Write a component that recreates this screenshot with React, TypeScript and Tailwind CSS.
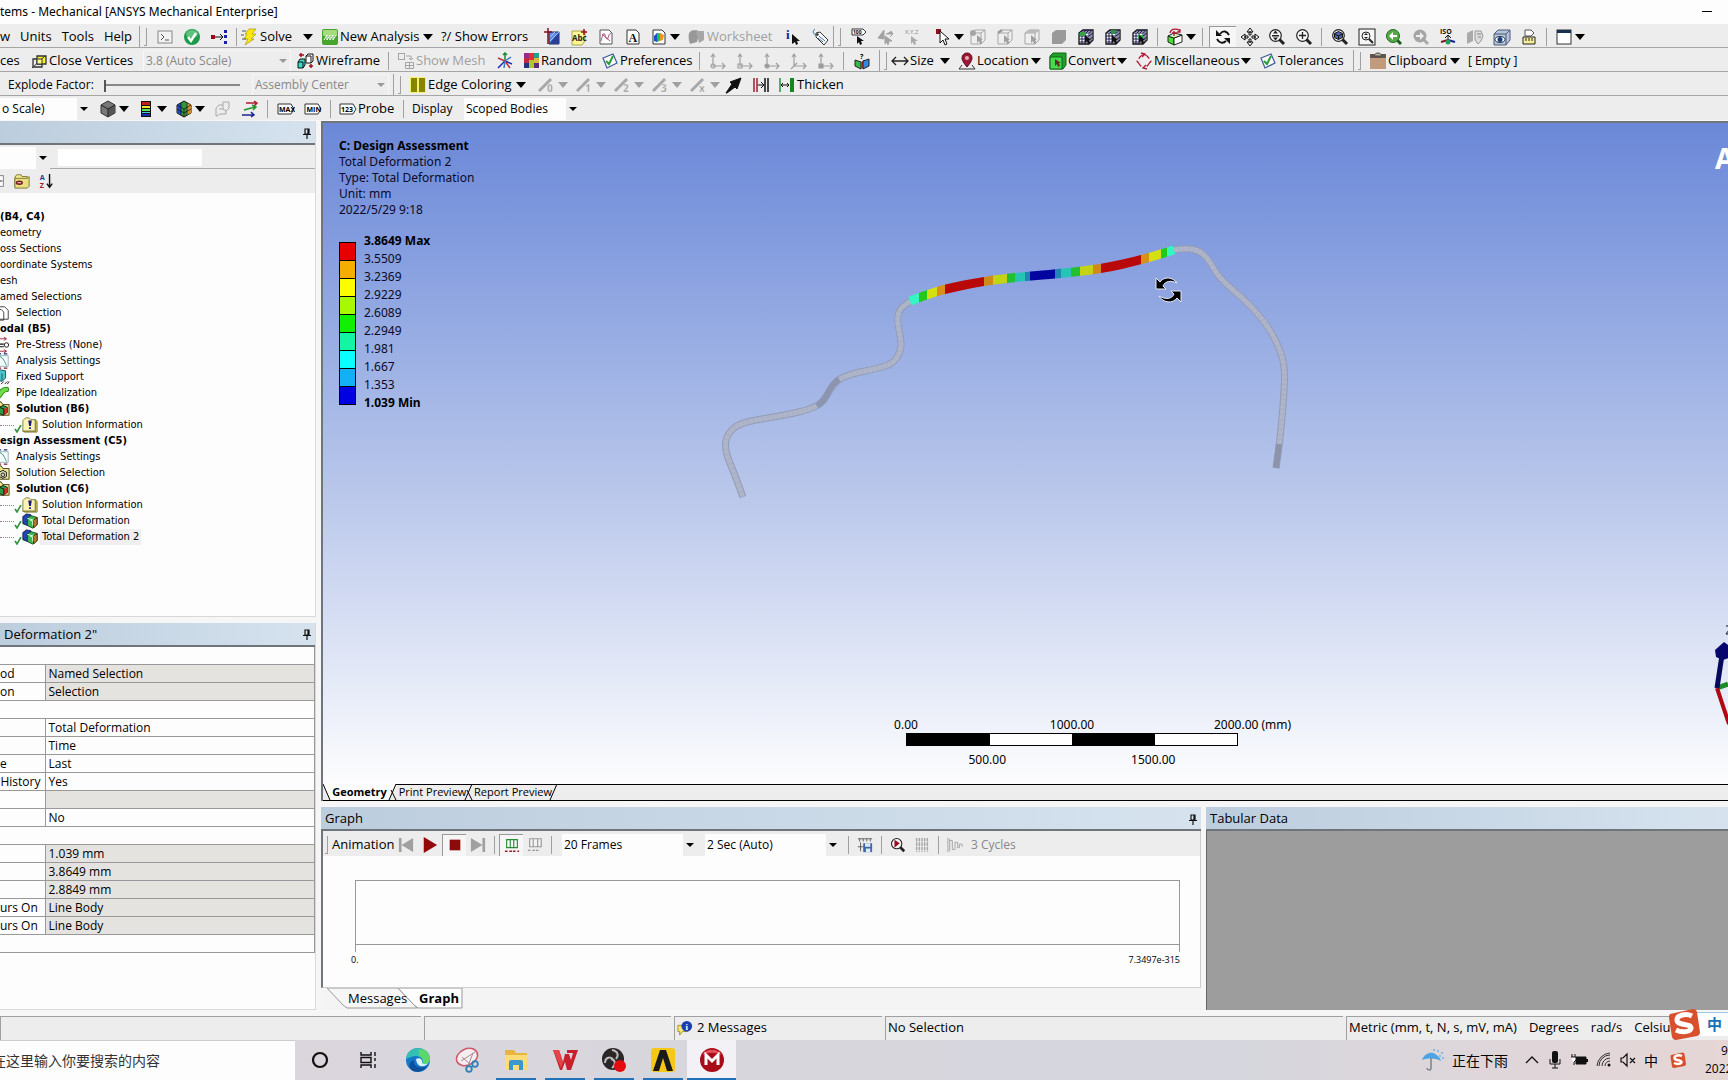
import { useState } from "react";
import type { ReactNode } from "react";

// Small page shape shared by several icons
const page = "M3 2h9l3 3v11H3z";
const cube = "M2 5l4-3h10v10l-4 4H2z";
const cubeEdges = "M2 5h10v11M12 5l4-3";
const cursor = "M8 7v8l2-2 1 3 2-1-1-3h2z";

// Wire cube used by the selection filters
const wireCube = (color: string, fill: string) => (
  <>
    <path d={cube} fill={fill} stroke={color} />
    <path d={cubeEdges} fill="none" stroke={color} />
  </>
);

const meshCube = (dot: string, x: number, y: number) => (
  <>
    <path d={cube} fill="#fff" stroke="#111" strokeWidth="1.3" />
    <path d="M2 8h10M2 11h10M2 14h10M5 5v11M8 5v11M2 5h10v11M12 5l4-3M4 3h10M14 4v10M12 8l4-3M12 12l4-3M6 5l3-3M9 5l3-3" fill="none" stroke="#1c1c50" />
    <rect x={x} y={y} width="5" height="4" fill={dot} />
    <path d={cursor} fill="#111" />
  </>
);

const lens = (inner: ReactNode) => (
  <>
    <path d="M11 11l5 5" stroke="#222" strokeWidth="3" />
    <circle cx="7.500" cy="7.500" r="5.800" fill="#f6f6f6" stroke="#222" strokeWidth="1.200" />
    {inner}
  </>
);

const axes = (dots: ReactNode) => (
  <g stroke="#a0a0a0" fill="none" strokeWidth="1.200">
    <path d="M4 2v12h12M2 5l2-3 2 3M13 11l3 3-3 3" />
    {dots}
  </g>
);

const edge = (label: string) => (
  <>
    <path d="M1 15L13 3" stroke="#a8a8a8" strokeWidth="3" />
    <text x="9" y="16" fontSize="10" fontWeight="700" fill="#8d8d8d" stroke="#ededed" strokeWidth="0.400">{label}</text>
  </>
);

const art: Record<string, ReactNode> = {
  console: <><rect x="2" y="3" width="14" height="12" fill="#f2f2f2" stroke="#888" /><path d="M5 6l3 3-3 3M9 12h4" fill="none" stroke="#555" /></>,
  check: <><circle cx="9" cy="9" r="8" fill="#1c9b4a" /><ellipse cx="9" cy="6" rx="6" ry="4" fill="#5fc27c" /><path d="M5 9l3 4 5-8" fill="none" stroke="#fff" strokeWidth="2.400" /></>,
  flow: <><rect x="1" y="7" width="4" height="4" fill="#a00018" /><path d="M5 9h7M10 6l3 3-3 3" stroke="#111" fill="none" /><path d="M14 2h3v3h-3zM14 7h3v3h-3zM14 13h3v3h-3z" fill="#1620a8" /></>,
  bolt: <><path d="M8 1l7 0-4 5 4 0-5 5 3 0-9 6 3-6H3l3-5H4z" fill="#fde910" stroke="#a89600" strokeWidth="0.700" /><path d="M1 3h4M0 7h3M1 11h4" stroke="#555" /></>,
  analysis: <><rect x="1" y="1" width="16" height="16" rx="2" fill="#46a52c" /><rect x="2" y="2" width="14" height="6" rx="1" fill="#a5dc7c" /><path d="M3 12l3-5v5l3-5v5l3-5v5l3-5" stroke="#fff" fill="none" /></>,
  plane: <><path d="M6 4h10v12H6z" fill="#5f8be8" stroke="#1c2c60" /><path d="M6 16L16 4v12z" fill="#2a3f98" /><path d="M7 9l5-5M7 13l9-9" stroke="#a6c0fa" /><path d="M5 0v16M1 4h8" stroke="#841020" strokeWidth="1.500" /></>,
  abc: <><path d="M2 3h13v10l-3 4H2z" fill="#fbf894" stroke="#a9a54c" /><text x="2" y="13" fontSize="8" fontWeight="700" fill="#222">Abc</text><path d="M14 1v6M11 4h6" stroke="#9c1020" strokeWidth="1.500" /></>,
  chart: <><path d={page} fill="#fff" stroke="#555" /><path d="M4 13c2-8 3-9 4-6s2 6 3 3 1-4 3-5M5 6l8 7" fill="none" stroke="#b04c80" /></>,
  letter: <><path d={page} fill="#fff" stroke="#333" /><text x="4.500" y="14" fontSize="12" fontWeight="700" fontFamily="Liberation Serif" fill="#111">A</text></>,
  contour: <><path d={page} fill="#fff" stroke="#333" /><path d="M4 8l3-3 3 1v6l-3 2-3-1z" fill="#174fd0" /><path d="M7 6l4-1v7l-4 2z" fill="#19c840" /><path d="M10 5l4 2-1 5-3 1z" fill="#e9952c" /></>,
  worksheet: <><path d="M1 5c3-4 6-2 8-3l2 3-2 9-7 2c-1-3-2-7-1-11z" fill="#989898" /><path d="M8 3h8v9l-5 3z" fill="#a7a7a7" /></>,
  info: <><text x="2" y="11" fontSize="13" fontWeight="700" fontFamily="Liberation Serif" fill="#1421a0">i</text><path d="M8 6v10l3-2 1 3 2-1-1-3h3z" fill="#111" /></>,
  tag: <><path d="M5 5l4-1 8 8-4 5-8-8z" fill="#fff" stroke="#333" /><path d="M4 1c-3 2-2 6 2 6M8 8l6 5M7 10l5 4" fill="none" stroke="#3f6f9c" /><circle cx="6.500" cy="6.500" r="1.200" fill="#333" /></>,
  tagCursor: <><path d="M2 1h11l3 3-3 3H2z" fill="#fff" stroke="#333" /><text x="3" y="6" fontSize="5" fontWeight="700">100</text><path d="M7 8v8l2-2 1 3 2-1-1-3h3z" fill="#111" /></>,
  flip: <path d="M1 10l6-8v9zM9 6h7l-2-3M16 6l-3 3M8 8v8l2-2 1 3 1-4h3z" fill="#a3a3a3" stroke="#a3a3a3" />,
  xyz: <><text x="1" y="6" fontSize="6" fill="#888">X,Y,Z</text><path d="M7 8v8l2-2 1 3 2-1-1-3h3z" fill="#aaa" /></>,
  pick: <><rect x="2" y="1" width="5" height="5" fill="#8b1020" /><path d="M6 3v12l3-3 2 5 2-1-2-5h4z" fill="#fff" stroke="#111" /></>,
  vertex: <>{wireCube("#a5a5a5", "#efefef")}<circle cx="4" cy="5" r="3" fill="#a5a5a5" /><path d={cursor} fill="#a0a0a0" /></>,
  edgeSel: <>{wireCube("#a5a5a5", "#efefef")}<path d="M2 5l4-3" stroke="#999" strokeWidth="2.500" /><path d={cursor} fill="#a0a0a0" /></>,
  face: <>{wireCube("#a5a5a5", "#efefef")}<path d="M2 5l4-3h10l-4 3z" fill="#bbb" /><path d={cursor} fill="#a0a0a0" /></>,
  body: <path d={cube} fill="#9a9a9a" />,
  meshNode: meshCube("#37a34a", 3, 4),
  meshFace: meshCube("#2f8f40", 7, 2),
  meshElem: meshCube("#37a34a", 7, 7),
  extend: <><path d="M2 8l6 2v7l-6-3z" fill="#49e02c" stroke="#222" /><path d="M8 10l8-3v7l-8 3z" fill="#fff" stroke="#222" /><path d="M2 8l6-3 8 2-8 3z" fill="#d8f8c8" stroke="#222" /><path d="M4 5c1-5 9-5 10-1M14 1v3h-3M8 3v5M6 5h5" fill="none" stroke="#b01830" strokeWidth="1.300" /></>,
  rotate: <><path d="M6 6c3-4 7-3 9 1M12 13c-3 3-7 2-9-2" fill="none" stroke="#111" strokeWidth="1.800" /><path d="M2 2v6h6zM16 16v-6h-6z" fill="#111" /></>,
  move: <path d="M9 0l3 4H6zM9 18l3-4H6zM0 9l4-3v6zM18 9l-4-3v6zM8 4h2v3H8zM8 11h2v3H8zM4 8h3v2H4zM11 8h3v2h-3z" fill="#f7f7f7" stroke="#111" />,
  zoomV: lens(<path d="M7.500 2.500l2.500 3H5zM7.500 12.500l2.500-3H5zM4 7h7v1.500H4z" fill="#222" />),
  zoomIn: lens(<path d="M7.500 4v7M4 7.500h7" stroke="#222" strokeWidth="1.300" />),
  zoomFit: lens(<><path d="M7.500 3.500l4 2v4l-4 2-4-2v-4z" fill="#5461ae" stroke="#111" /><path d="M4 6l3.500 2L11 6M7.500 8v3" stroke="#111" fill="none" /></>),
  zoomBox: <><rect x="1" y="1" width="16" height="16" fill="#f6f6f6" stroke="#222" /><circle cx="8" cy="8" r="4" fill="none" stroke="#222" /><path d="M11 11l4 4" stroke="#222" strokeWidth="2" /><path d="M8 5l2 2H6zM8 11l2-2H6z" fill="#222" /></>,
  zoomPrev: <><path d="M11 11l5 5" stroke="#1d5c1d" strokeWidth="3" /><circle cx="8" cy="8" r="6.500" fill="#55a848" stroke="#226e22" /><path d="M4 8l4-4v3h4v2H8v3z" fill="#fff" /></>,
  zoomNext: <><path d="M11 11l5 5" stroke="#aaa" strokeWidth="3" /><circle cx="8" cy="8" r="6.500" fill="#a5a5a5" /><path d="M12 8L8 4v3H4v2h4v3z" fill="#eee" /></>,
  iso: <><text x="1" y="6" fontSize="7" fontWeight="700" fill="#111">ISO</text><path d="M9 7v9M6 10l3-3 3 3" stroke="#111" fill="none" /><path d="M9 12l-7 2" stroke="#921020" strokeWidth="2" /><path d="M9 12l7 2" stroke="#1421a0" strokeWidth="2" /><circle cx="9" cy="14" r="2.500" fill="#2d9c58" /></>,
  mirror: <><path d="M1 5l6-3v11l-6 3z" fill="#aaa" /><path d="M9 3h6l2 5-2 5-3 3-3-4z" fill="#dcdcdc" stroke="#999" /><path d="M11 6h4M12 9h3" stroke="#888" /></>,
  view: <><path d="M1 6l4-4h12v10l-4 5H1z" fill="#b4c4da" stroke="#4c5b78" /><path d="M1 6h12v11M13 6l4-4" fill="none" stroke="#4c5b78" /><ellipse cx="7" cy="11.500" rx="5" ry="3" fill="#fff" stroke="#234" /><circle cx="7" cy="11.500" r="2.500" fill="#183c80" /></>,
  ruler: <><path d="M5 2h6l3 3-3 3H5z" fill="#fff" stroke="#555" /><path d="M3 9h12v7H3z" fill="#f5f098" stroke="#222" /><path d="M6 10v3M9 10v3M12 10v3" stroke="#222" /></>,
  window: <><rect x="2" y="2" width="14" height="14" fill="#fff" stroke="#333" /><path d="M2 2h14v3H2z" fill="#1a3050" /></>,
  close: <><path d="M3 7h9v8H3z" fill="none" stroke="#333" strokeWidth="1.300" /><path d="M7 4h9v8H7z" fill="#fbf030" stroke="#333" strokeWidth="1.300" /><path d="M2 16L15 4" stroke="#333" /><path d="M7 7h5v5H7z" fill="#fffb90" stroke="#333" /></>,
  wire: <><path d="M1 10l2-3h5v6l-2 3H1z" fill="#3fd8c8" stroke="#111" /><path d="M9 4l2-2h5v7l-2 2H9z" fill="#fff" stroke="#111" /><path d="M9 4h5v7M1 10h5v6" fill="none" stroke="#111" /><path d="M4 1v4M2 3h5M14 12v4M12 14h4" stroke="#a01024" strokeWidth="1.500" /></>,
  mesh: <g fill="none" stroke="#a5a5a5"><rect x="1.500" y="1.500" width="6" height="6" /><path d="M9 4h5v3M12 6l2 2 2-2M8.500 10.500h8v6h-8zM12.500 10v7M8 13.500h9" /></g>,
  spark: <g strokeWidth="1.500" fill="none"><path d="M9 9V1M7 3l2-2 2 2" stroke="#198c30" /><path d="M9 9l-7 7M9 9l7 3" stroke="#1f2bb0" /><path d="M2 6l7 3 5 7" stroke="#c22a3a" /><path d="M9 9l6-4M9 9l-1 7" stroke="#3a7ac8" /></g>,
  random: <><path d="M2 1h5v5H2z" fill="#952a92" /><path d="M7 1h5v7H7z" fill="#e23030" /><path d="M12 1h5v5h-5z" fill="#2a9c8c" /><path d="M2 6h5v5H2z" fill="#c22840" /><path d="M7 8h5v8H7z" fill="#a9c830" /><path d="M12 6h5v5h-5z" fill="#d8b840" /><path d="M2 11h5v5H2z" fill="#24357c" /><path d="M12 11h5v5h-5z" fill="#5b2c74" /></>,
  prefs: <><path d="M2 6l10-4 4 9-10 5z" fill="#fafafa" stroke="#3b5a9c" strokeWidth="1.200" /><path d="M5 9l3 3 4-8" stroke="#2a9c3c" strokeWidth="2" fill="none" /></>,
  axesA: axes(<circle cx="4" cy="14" r="2" />),
  axesB: axes(<path d="M2 12h4v4H2z" />),
  axesC: axes(<circle cx="4" cy="14" r="2" fill="#999" />),
  axesD: axes(<path d="M1 17l6-6" />),
  axesE: axes(<path d="M2 12h4v4H2z" fill="#999" />),
  book: <><text x="7" y="7" fontSize="7" fontWeight="700">?</text><path d="M2 8l6 2v7l-6-3z" fill="#36b848" stroke="#222" /><path d="M8 10l3-2v7l-3 2z" fill="#e02828" /><path d="M10 9l6-2v7l-6 3z" fill="#2f8ae0" stroke="#222" /></>,
  size: <path d="M1 9h16M5 5L1 9l4 4M13 5l4 4-4 4" stroke="#222" strokeWidth="1.300" fill="none" />,
  pin: <><path d="M9 15C4 9 4 7 4 6a5 5 0 0 1 10 0c0 1 0 3-5 9z" fill="#9c1834" stroke="#5c0c20" /><circle cx="9" cy="6" r="2" fill="#e8b0b8" /><path d="M4 13l-3 4h16l-3-4" fill="none" stroke="#333" /></>,
  convert: <><path d="M1 4l3-3h13v12l-3 4H1z" fill="#22a02c" stroke="#0f6418" /><path d="M1 5h12v12H1z" fill="#49d94c" stroke="#0f6418" /><path d="M6 7v7l2-2 1 3 2-1-1-3h2z" fill="#5c3024" /></>,
  misc: <g fill="none" stroke="#b01c38" strokeWidth="1.300"><path d="M9 2C5 4 5 5 2 9c3 4 3 5 7 7M9 2c4 2 4 3 7 7-3 4-3 5-7 7" strokeDasharray="7 3" /><path d="M6 1l4 1-3 3M12 17l-4-1 3-3" /></g>,
  clip: <><path d="M1 2h16v15H1z" fill="#c29a7c" /><path d="M1 2h16v4H1z" fill="#64564c" /><path d="M5 4c1-4 7-4 8 0z" fill="#b8b8a8" stroke="#444" /></>,
  coloring: <><path d="M1 1h16v16H1z" fill="#f4f070" /><path d="M2 2h6v14H2zM10 2h6v14h-6z" fill="#858500" /></>,
  edge0: edge("0"), edge1: edge("1"), edge2: edge("2"), edge3: edge("3"), edgeX: edge("x"),
  dart: <path d="M1 17l6-9-2-2 11-4-4 11-2-2-8 6z" fill="#111" stroke="#111" />,
  gapIcon: <><path d="M2 2v14M5 2v14" stroke="#a01c30" strokeWidth="1.500" /><path d="M13 2v14M16 2v14" stroke="#111" strokeWidth="1.500" /><path d="M6 9h6M9 6l3 3-3 3" fill="none" stroke="#111" /></>,
  thicken: <><path d="M2 2v14" stroke="#20963a" strokeWidth="1.500" /><path d="M12 2h4v14h-4z" fill="#17861f" /><path d="M3 9h8M5 7L3 9l2 2M9 7l2 2-2 2" fill="none" stroke="#111" /></>,
  solid: <><path d="M9 1l7 4v8l-7 4-7-4V5z" fill="#777" stroke="#333" /><path d="M9 9l7-4v8l-7 4z" fill="#555" /><path d="M2 5l7 4 7-4M9 9v8" fill="none" stroke="#222" /></>,
  bands: <><path d="M4 1h10v16H4z" fill="#111" /><path d="M5 2h8v3H5z" fill="#c81c1c" /><path d="M5 6h8v2H5z" fill="#f2e62c" /><path d="M5 9h8v2H5z" fill="#5be05c" /><path d="M5 12h8v1H5z" fill="#40c8e8" /><path d="M5 14h8v2H5z" fill="#1c28b0" /></>,
  result: <><path d="M9 1l7 4v8l-7 4-7-4V5z" fill="#2f9a3c" stroke="#111" /><path d="M2 5l4-2v12l-4-2z" fill="#2645c0" /><path d="M12 3l4 2v8l-4 2z" fill="#d09030" /><path d="M2 5l7 4 7-4M9 9v8M6 3v12M12 3v12M2 9l7 4 7-4" stroke="#111" strokeWidth="0.700" fill="none" /></>,
  ghost: <path d="M2 8l3-3h4V2h6v6l-3 3v3H6l-3 2H2zM9 5v4H5M9 9l3 2" fill="#ececec" stroke="#a8a8a8" />,
  vectors: <g fill="none" strokeWidth="1.500"><path d="M5 3h11M13 1l3 2-3 3" stroke="#b01c30" /><path d="M3 10L14 7M11 5l4 2-3 3" stroke="#22942c" /><path d="M1 15h11M10 12l3 3-3 2" stroke="#1b2790" /></g>,
  max: <><path d="M1 4h13l3 5-3 5H1z" fill="#fff" stroke="#333" /><text x="2" y="12" fontSize="7" fontWeight="700">MAX</text></>,
  min: <><path d="M1 4h13l3 5-3 5H1z" fill="#fff" stroke="#333" /><text x="2.500" y="12" fontSize="7" fontWeight="700">MIN</text></>,
  probe: <><path d="M1 4h13l3 5-3 5H1z" fill="#fff" stroke="#333" /><text x="2" y="12" fontSize="7" fontWeight="700">123</text></>,
  folder: <><path d="M1 5l2-3h5l1 2h6v11H1z" fill="#f0e890" stroke="#77702c" /><path d="M1 6h14l2-2v11l-2 2H1z" fill="#e8df80" stroke="#77702c" /><ellipse cx="6" cy="11" rx="4" ry="2.500" fill="#7c1c20" /><path d="M4 11h4" stroke="#fff" /></>,
  sort: <><text x="2" y="8" fontSize="8" fontWeight="700" fill="#1c3d94">A</text><text x="2" y="17" fontSize="8" fontWeight="700" fill="#a02028">Z</text><path d="M13 1v14M10 12l3 4 3-4" stroke="#111" strokeWidth="1.600" fill="none" /></>,
  collapse: <><rect x="3" y="3" width="12" height="12" fill="#fff" stroke="#777" /><path d="M6 9h8" stroke="#111" /></>,
  blankPage: <path d="M4 2h8l4 4v10H4zM1 5h7l3 3v9H1z" fill="#fff" stroke="#333" />,
  preStress: <><path d="M3 2h11M11 0l3 2-3 2M3 16h11M11 14l3 2-3 2" stroke="#a02030" fill="none" /><path d="M6 8h5M6 11h5" stroke="#111" strokeWidth="1.300" /><circle cx="14" cy="9" r="2.500" fill="none" stroke="#111" /></>,
  settings: <><path d="M3 3h13v12H3z" fill="#f4fafa" stroke="#8fb0b0" /><path d="M5 4c5 0 6 4 9 10" stroke="#2b8a78" fill="none" /><path d="M4 1h4M11 1h4" stroke="#1c2480" strokeWidth="1.500" /><path d="M4 17h4M11 17h4" stroke="#8c1424" strokeWidth="1.500" /></>,
  support: <><path d="M3 4l4-3 6 1v8l-4 4-6-2z" fill="#4cc4cc" stroke="#174c58" /><path d="M9 5v8" stroke="#174c58" /><path d="M8 17l3-3M12 17l3-3M15 17l2-3" stroke="#111" /></>,
  pipe: <g fill="none" strokeLinecap="round"><path d="M2 14c7-1 4-9 12-9" stroke="#2f8c1c" strokeWidth="6" /><path d="M2 14c7-1 4-9 12-9" stroke="#6fdc48" strokeWidth="4" /></g>,
  solution: <><path d="M1 4l3-3h4l2 3h7v12H1z" fill="#efe78c" stroke="#3b3410" /><path d="M6 7l4-2 5 2v6l-5 3-4-2z" fill="#2a9c48" stroke="#111" /><path d="M11 9l4-2v6l-4 3z" fill="#cc3028" /><path d="M6 7l5 2v7" fill="none" stroke="#111" /></>,
  solSel: <><path d="M1 4l3-3h4l2 3h7v12H1z" fill="#efe78c" stroke="#3b3410" /><path d="M6 8l4-2 4 2v5l-4 2-4-2z" fill="#d8d8b0" stroke="#111" /><circle cx="10" cy="11" r="2" fill="none" stroke="#111" /></>,
  solInfo: <><path d="M1 4l3-3h4l2 2h5v13H1z" fill="#f9f3b8" stroke="#7c7430" /><path d="M15 3l2 2v12H3l-2-1h14z" fill="#d8cc60" stroke="#7c7430" /><path d="M7 4h4l-1 6H8z" fill="#181880" /><rect x="8" y="11.500" width="2" height="2" fill="#181880" /></>,
  deform: <><path d="M1 4l4-3 5 1v9l-4 3-5-2z" fill="#2046b4" stroke="#101840" /><path d="M6 6l4-3 7 2v8l-5 4-6-3z" fill="#3cb850" stroke="#14401c" /><path d="M13 8l4-3v8l-4 4z" fill="#c07830" stroke="#402810" /><path d="M9 8l3 1v5M6 6l7 2" stroke="#e8ffe8" fill="none" /></>,
  first: <path d="M1 1h3v16H1zM17 1v16L4 9z" fill="#a0a0a0" />,
  play: <path d="M2 0l15 9-15 9z" fill="#940a0a" />,
  stop: <path d="M3 3h12v12H3z" fill="#8c0a0a" />,
  last: <path d="M14 1h3v16h-3zM1 1v16l13-8z" fill="#a0a0a0" />,
  frames: <><path d="M3 3h12v9H3zM7 3v9M11 3v9" fill="#fff" stroke="#288a34" strokeWidth="1.300" /><path d="M1 16h3M6 16h3M10 16h3M15 16h2" stroke="#922" strokeWidth="1.500" /></>,
  framesOff: <><path d="M3 2h13v9H3zM7 2v9M12 2v9" fill="#f4f4f4" stroke="#999" strokeWidth="1.300" /><path d="M1 15h3M6 15h3M10 15h3" stroke="#999" strokeWidth="1.500" /></>,
  save: <><path d="M1 2h16M3 2v3M7 2v3M11 2v3M15 2v3M4 6v10M1 11h6" stroke="#555" fill="none" /><path d="M7 7h10v10H7z" fill="#3a66ac" /><path d="M9 7h6v4H9zM10 13h5v4h-5z" fill="#e0e8f4" /></>,
  zoomPlay: lens(<path d="M5 3l6 4-6 5z" fill="#94101c" />),
  table: <path d="M3 1v16M6 1v16M9 1v16M12 1v16M15 1v16" stroke="#a5a5a5" strokeWidth="1.600" strokeDasharray="4 1" />,
  cycles: <path d="M1 1v16M3 2v14M3 4h3v10h3V6h3v6h2V8h3v3" stroke="#a0a0a0" fill="none" />,
  message: <><path d="M1 6h11v7H6l-3 4v-4H1z" fill="#f8e878" stroke="#a08c20" /><circle cx="11" cy="7" r="6" fill="#1b3fae" /><text x="9.500" y="11" fontSize="10" fontWeight="700" fontFamily="Liberation Serif" fill="#fff">i</text></>,
};

function Icon({ name, className = "size-[18px]" }: { name: string; className?: string }) {
  return (
    <svg viewBox="0 0 18 18" className={`shrink-0 ${className}`} aria-hidden="true">
      {art[name]}
    </svg>
  );
}

function Arrow({ muted = false }: { muted?: boolean }) {
  return (
    <svg viewBox="0 0 10 6" className={`h-1.5 w-2.5 shrink-0 ${muted ? "fill-[#a0a0a0]" : "fill-black"}`} aria-hidden="true">
      <path d="M0 0h10L5 6z" />
    </svg>
  );
}

function Sep({ space = "mx-1" }: { space?: string }) {
  return <span className={`h-[18px] w-px shrink-0 bg-[#a0a0a0] ${space}`} />;
}

// Divider between two docked toolbars, followed by the drag grip
function Grip() {
  return (
    <span className="flex h-full w-3 shrink-0 items-center border-l border-[#a0a0a0]">
      <span className="ml-1 h-[18px] w-[3px] border-r border-b border-[#a0a0a0]" />
    </span>
  );
}

type ToolProps = { name: string; label: string; pressed?: boolean; narrow?: boolean };

function Tool({ name, label, pressed = false, narrow = false }: ToolProps) {
  return (
    <button
      type="button"
      aria-label={label}
      className={`flex h-[22px] shrink-0 items-center justify-center ${narrow ? "w-6" : "w-[27px]"} ${pressed ? "border-t border-l border-[#999] bg-[#f6f6f6]" : ""}`}
    >
      <Icon name={name} className={narrow ? "size-4" : "size-[18px]"} />
    </button>
  );
}

// Icon with a drop-down arrow
function MenuTool({ name, label, muted = false }: { name: string; label: string; muted?: boolean }) {
  return (
    <button type="button" aria-label={label} className="flex h-[22px] w-[34px] shrink-0 items-center gap-0.5 pl-1">
      <Icon name={name} />
      <Arrow muted={muted} />
    </button>
  );
}

type TextToolProps = { name?: string; text: string; width: string; menu?: boolean; muted?: boolean };

function TextTool({ name, text, width, menu = false, muted = false }: TextToolProps) {
  return (
    <button type="button" className={`flex h-[22px] shrink-0 items-center gap-px whitespace-nowrap ${width} ${muted ? "text-[#a0a0a0]" : ""}`}>
      {name && <Icon name={name} />}
      <span className={menu ? "grow text-left" : ""}>{text}</span>
      {menu && <span className="pr-2"><Arrow /></span>}
    </button>
  );
}

type ComboProps = { label: string; value: string; width: string; disabled?: boolean };

function Combo({ label, value, width, disabled = false }: ComboProps) {
  return (
    <span className={`relative flex h-[22px] shrink-0 items-center ${width} ${disabled ? "border border-[#f8f8f8]" : "bg-[#fdfdfd]"}`}>
      <select
        aria-label={label}
        disabled={disabled}
        className={`h-full w-full appearance-none bg-transparent pl-0.5 text-[12px] outline-none ${disabled ? "text-[#888]" : "text-black"}`}
      >
        <option>{value}</option>
      </select>
      <span className={`pointer-events-none absolute inset-y-0 right-0 flex w-3.5 items-center justify-center ${disabled ? "" : "bg-[#ededed]"}`}>
        <svg viewBox="0 0 8 4" className={`h-1 w-2 ${disabled ? "fill-[#999]" : "fill-black"}`} aria-hidden="true"><path d="M0 0h8L4 4z" /></svg>
      </span>
    </span>
  );
}

function PanelHeader({ title, pin = true }: { title: string; pin?: boolean }) {
  return (
    <div className="flex h-6 shrink-0 items-center justify-between border-b-2 border-[#70757c] bg-linear-to-r from-[#bccddd] to-[#d6e3ef] px-1 pt-0.5 text-[13px]">
      <span>{title}</span>
      {pin && (
        <button type="button" aria-label="Pin panel">
          <svg viewBox="0 0 8 11" className="h-[11px] w-2" aria-hidden="true">
            <path d="M2 1h4v5H2zM5 1v5M0 6.500h8M4 7v4" fill="none" stroke="#111" strokeWidth="1.200" />
          </svg>
        </button>
      )}
    </div>
  );
}

function Toolbars() {
  const [explode, setExplode] = useState(0);
  const row = "flex h-6 items-center overflow-hidden border-b border-[#a5a5a5] bg-[#ededed] pt-0.5";

  return (
    <div className="shrink-0 text-[13px]">
      <div className={row}>
        <nav className="flex w-[139px] shrink-0 items-center gap-2.5 whitespace-nowrap">
          <button type="button">w</button>
          <button type="button">Units</button>
          <button type="button">Tools</button>
          <button type="button">Help</button>
        </nav>
        <Grip />
        <Tool name="console" label="Command window" />
        <Tool name="check" label="Status" />
        <Tool name="flow" label="Wizard" />
        <Sep />
        <TextTool name="bolt" text="Solve" width="w-[80px]" menu />
        <TextTool name="analysis" text="New Analysis" width="w-[120px]" menu />
        <TextTool text="?/ Show Errors" width="w-[97px]" />
        <Tool name="plane" label="Section plane" />
        <Tool name="abc" label="Annotation" />
        <Tool name="chart" label="Chart" />
        <Tool name="letter" label="Comment" />
        <MenuTool name="contour" label="Image" />
        <span className="w-2" />
        <TextTool name="worksheet" text="Worksheet" width="w-[91px]" muted />
        <Tool name="info" label="Selection information" />
        <Tool name="tag" label="Tags" />
        <Grip />
        <Tool name="tagCursor" label="Label" />
        <Tool name="flip" label="Direction" />
        <Tool name="xyz" label="Coordinates" />
        <span className="w-1" />
        <MenuTool name="pick" label="Select type" />
        <Tool name="vertex" label="Vertex" />
        <Tool name="edgeSel" label="Edge" />
        <Tool name="face" label="Face" />
        <Tool name="body" label="Body" />
        <Tool name="meshNode" label="Node" />
        <Tool name="meshFace" label="Element face" />
        <Tool name="meshElem" label="Element" />
        <Sep />
        <MenuTool name="extend" label="Extend selection" />
        <Sep space="mx-1.5" />
        <Tool name="rotate" label="Rotate" pressed />
        <Tool name="move" label="Pan" />
        <Tool name="zoomV" label="Zoom" />
        <Tool name="zoomIn" label="Box zoom" />
        <Sep />
        <Tool name="zoomFit" label="Zoom to fit" />
        <Tool name="zoomBox" label="Magnifier" />
        <Tool name="zoomPrev" label="Previous view" />
        <Tool name="zoomNext" label="Next view" />
        <Tool name="iso" label="Isometric" />
        <Tool name="mirror" label="Look at" />
        <Tool name="view" label="Manage views" />
        <Tool name="ruler" label="Rescale annotation" />
        <Sep />
        <MenuTool name="window" label="Viewports" />
      </div>

      <div className={row}>
        <TextTool text="ces" width="w-[30px]" />
        <TextTool name="close" text="Close Vertices" width="w-[113px]" />
        <Combo label="Deformation scale" value="3.8 (Auto Scale)" width="w-[148px]" disabled />
        <span className="w-1.5" />
        <TextTool name="wire" text="Wireframe" width="w-[83px]" />
        <Sep space="mx-2" />
        <TextTool name="mesh" text="Show Mesh" width="w-[94px]" muted />
        <Tool name="spark" label="Triad" />
        <span className="w-1" />
        <TextTool name="random" text="Random" width="w-[79px]" />
        <TextTool name="prefs" text="Preferences" width="w-[94px]" />
        <Sep />
        <Tool name="axesA" label="Coordinate system" />
        <Tool name="axesB" label="Offset X" />
        <Tool name="axesC" label="Offset Y" />
        <Tool name="axesD" label="Rotate X" />
        <Tool name="axesE" label="Rotate Y" />
        <Sep />
        <Tool name="book" label="Help" />
        <span className="w-1" />
        <Grip />
        <TextTool name="size" text="Size" width="w-[67px]" menu />
        <TextTool name="pin" text="Location" width="w-[91px]" menu />
        <TextTool name="convert" text="Convert" width="w-[86px]" menu />
        <TextTool name="misc" text="Miscellaneous" width="w-[124px]" menu />
        <TextTool name="prefs" text="Tolerances" width="w-[94px]" />
        <Grip />
        <span className="w-1" />
        <TextTool name="clip" text="Clipboard" width="w-[99px]" menu />
        <span className="text-[12px]">[ Empty ]</span>
      </div>

      <div className={row}>
        <label htmlFor="explode" className="w-[96px] shrink-0 pl-2 text-[12px]">Explode Factor:</label>
        <input
          id="explode"
          type="range"
          value={explode}
          onChange={(e) => setExplode(Number(e.target.value))}
          className="mx-2 h-4 w-[136px] shrink-0 appearance-none bg-transparent [&::-webkit-slider-runnable-track]:h-0.5 [&::-webkit-slider-runnable-track]:bg-[#888] [&::-webkit-slider-thumb]:-mt-1 [&::-webkit-slider-thumb]:h-3 [&::-webkit-slider-thumb]:w-0.5 [&::-webkit-slider-thumb]:appearance-none [&::-webkit-slider-thumb]:bg-[#555]"
        />
        <span className="w-1" />
        <Combo label="Explode center" value="Assembly Center" width="w-[137px]" disabled />
        <span className="w-1" />
        <Grip />
        <span className="w-1" />
        <TextTool name="coloring" text="Edge Coloring" width="w-[125px]" menu />
        <span className="flex gap-1">
          <MenuTool name="edge0" label="Free edges" muted />
          <MenuTool name="edge1" label="Single edges" muted />
          <MenuTool name="edge2" label="Double edges" muted />
          <MenuTool name="edge3" label="Triple edges" muted />
          <MenuTool name="edgeX" label="Multiple edges" muted />
        </span>
        <Tool name="dart" label="Direction arrow" />
        <Tool name="gapIcon" label="Gap" />
        <span className="w-1" />
        <TextTool name="thicken" text="Thicken" width="w-[80px]" />
      </div>

      <div className="flex h-6 items-center overflow-hidden bg-[#ededed] pt-0.5">
        <Combo label="Result scale" value="o Scale)" width="w-[91px]" />
        <span className="flex gap-1 px-1">
          <MenuTool name="solid" label="Geometry display" />
          <MenuTool name="bands" label="Contour bands" />
          <MenuTool name="result" label="Edge display" />
        </span>
        <Tool name="ghost" label="Undeformed" />
        <Tool name="vectors" label="Vectors" />
        <Sep />
        <Tool name="max" label="Maximum" />
        <Tool name="min" label="Minimum" />
        <Sep />
        <span className="w-1" />
        <TextTool name="probe" text="Probe" width="w-[64px]" />
        <Sep space="mr-2" />
        <span className="w-[52px] text-[12px]">Display</span>
        <Combo label="Display bodies" value="Scoped Bodies" width="w-[116px]" />
      </div>
    </div>
  );
}

type TreeItem = { text: string; icon?: string; level: number; bold?: boolean; selected?: boolean };

const tree: TreeItem[] = [
  { text: "(B4, C4)", level: 0, bold: true },
  { text: "eometry", level: 0 },
  { text: "oss Sections", level: 0 },
  { text: "oordinate Systems", level: 0 },
  { text: "esh", level: 0 },
  { text: "amed Selections", level: 0 },
  { text: "Selection", icon: "blankPage", level: 1 },
  { text: "odal (B5)", level: 0, bold: true },
  { text: "Pre-Stress (None)", icon: "preStress", level: 1 },
  { text: "Analysis Settings", icon: "settings", level: 1 },
  { text: "Fixed Support", icon: "support", level: 1 },
  { text: "Pipe Idealization", icon: "pipe", level: 1 },
  { text: "Solution (B6)", icon: "solution", level: 1, bold: true },
  { text: "Solution Information", icon: "solInfo", level: 2 },
  { text: "esign Assessment (C5)", level: 0, bold: true },
  { text: "Analysis Settings", icon: "settings", level: 1 },
  { text: "Solution Selection", icon: "solSel", level: 1 },
  { text: "Solution (C6)", icon: "solution", level: 1, bold: true },
  { text: "Solution Information", icon: "solInfo", level: 2 },
  { text: "Total Deformation", icon: "deform", level: 2 },
  { text: "Total Deformation 2", icon: "deform", level: 2, selected: true },
];

function Outline() {
  return (
    <section className="flex grow flex-col border-r border-b border-[#d8d8d8] bg-[#fdfdfd]">
      <PanelHeader title="" />
      <div className="flex h-6 shrink-0 items-center gap-2 border-b border-[#aaa] bg-[#ededed] pt-0.5">
        <Combo label="Filter" value="" width="w-[50px]" />
        <input aria-label="Search outline" className="h-[17px] w-36 bg-white outline-none" />
      </div>
      <div className="flex h-6 shrink-0 items-center bg-[#ededed]">
        <span className="-ml-3.5 flex">
          <Tool name="collapse" label="Collapse all" narrow />
          <Tool name="folder" label="Hide folders" narrow />
          <Tool name="sort" label="Sort" narrow />
        </span>
      </div>
      <ul className="overflow-hidden pt-4 font-['DejaVu_Sans_Condensed','DejaVu_Sans',sans-serif] text-[11px] leading-4 whitespace-nowrap">
        {tree.map((item, index) => (
          <li key={index} className={`flex h-4 items-center ${item.bold ? "font-bold" : ""}`}>
            {item.level === 1 && <span className="-ml-1.5 flex w-[22px] shrink-0"><Icon name={item.icon!} className="size-4" /></span>}
            {item.level === 2 && (
              <span className="flex w-10 shrink-0 items-center">
                <span className="w-3.5 border-t border-dotted border-[#888]" />
                <svg viewBox="0 0 8 8" className="size-2 self-end" aria-hidden="true"><path d="M1 4l2 3 4-7" fill="none" stroke="#2c9440" strokeWidth="1.600" /></svg>
                <Icon name={item.icon!} className="size-4" />
              </span>
            )}
            <span className={item.level === 2 ? `px-0.5 ${item.selected ? "bg-[#efeef0]" : ""}` : ""}>{item.text}</span>
          </li>
        ))}
      </ul>
    </section>
  );
}

// A row with no cells is a category heading
const details: { name?: string; value?: string; readOnly?: boolean; heading?: boolean }[] = [
  { heading: true },
  { name: "od", value: "Named Selection", readOnly: true },
  { name: "on", value: "Selection", readOnly: true },
  { heading: true },
  { name: "", value: "Total Deformation" },
  { name: "", value: "Time" },
  { name: "e", value: "Last" },
  { name: "History", value: "Yes" },
  { name: "", value: "", readOnly: true },
  { name: "", value: "No" },
  { heading: true },
  { name: "", value: "1.039 mm", readOnly: true },
  { name: "", value: "3.8649 mm", readOnly: true },
  { name: "", value: "2.8849 mm", readOnly: true },
  { name: "urs On", value: "Line Body", readOnly: true },
  { name: "urs On", value: "Line Body", readOnly: true },
  { heading: true },
];

function Details() {
  return (
    <section className="mt-1.5 shrink-0 border-r border-b border-[#d8d8d8] bg-[#fdfdfd] pb-14">
      <PanelHeader title="Deformation 2&quot;" />
      <table className="w-full table-fixed border-collapse text-[12px] leading-4">
        <colgroup>
          <col className="w-[45px]" />
          <col />
        </colgroup>
        <tbody>
          {details.map((row, index) =>
            row.heading ? (
              <tr key={index} className="h-[18px] border-r border-b border-[#999]">
                <td colSpan={2} className="p-0" />
              </tr>
            ) : (
              <tr key={index} className="h-[18px] border-r border-b border-[#999]">
                <td className={`border-r border-[#999] p-0 whitespace-nowrap ${row.name === "History" ? "pr-1 text-right" : ""}`}>{row.name}</td>
                <td className={`p-0 pl-[3px] ${row.readOnly ? "bg-[#e5e3e0]" : ""}`}>{row.value}</td>
              </tr>
            )
          )}
        </tbody>
      </table>
    </section>
  );
}

const legend = ["#e80000", "#f5ae00", "#fdfd00", "#a8f800", "#10f000", "#14f5a4", "#0cfdfd", "#14b0f5", "#0000e0"];
const levels = ["3.8649 Max", "3.5509", "3.2369", "2.9229", "2.6089", "2.2949", "1.981", "1.667", "1.353", "1.039 Min"];

// Colour bands along the deformed span: [x where the band ends, colour]
const bands: [number, string][] = [
  [918, "#35f5c0"], [926, "#22c81c"], [936, "#d4e010"], [944, "#d89018"], [983, "#b80808"],
  [992, "#d08a18"], [1006, "#c4d414"], [1014, "#22c030"], [1024, "#26c4b4"], [1029, "#1f86b4"],
  [1054, "#0404a0"], [1060, "#1f86b4"], [1070, "#26c4b4"], [1079, "#22c030"], [1092, "#c4d414"],
  [1100, "#d08a18"], [1140, "#b80808"], [1148, "#d89018"], [1160, "#d4e010"], [1166, "#22c81c"], [1180, "#35f5c0"],
];

type Point = [number, number];

const leftPipe: Point[] = [[742, 497], [734, 475], [725, 454], [724, 438], [736, 424], [760, 419], [785, 415], [810, 409], [822, 402], [828, 391], [836, 380], [850, 374], [874, 369], [892, 364], [900, 351], [900, 338], [896, 322], [898, 309], [911, 300]];
const span: Point[] = [[909, 301], [925, 295], [944, 289], [983, 281], [1029, 276], [1054, 274], [1100, 269], [1140, 260], [1173, 250]];
const rightPipe: Point[] = [[1172, 250], [1186, 248], [1199, 251], [1208, 260], [1218, 278], [1246, 302], [1264, 322], [1276, 342], [1284, 365], [1283, 395], [1279, 440], [1275, 468]];

// Quadratic curve through the midpoints of a polyline
function smooth(points: Point[]) {
  let d = `M${points[0][0]} ${points[0][1]}`;
  for (let i = 1; i < points.length - 1; i++) {
    const [x, y] = points[i];
    const [nx, ny] = points[i + 1];
    d += ` Q${x} ${y} ${(x + nx) / 2} ${(y + ny) / 2}`;
  }
  const end = points[points.length - 1];
  return `${d} L${end[0]} ${end[1]}`;
}

function Pipes() {
  return (
    <svg viewBox="700 230 600 280" className="absolute top-[107px] left-[378px] h-[280px] w-[600px]" role="img" aria-label="Deformed pipe model">
      <defs>
        <linearGradient id="bands" gradientUnits="userSpaceOnUse" x1="900" y1="0" x2="1180" y2="0">
          {bands.map(([x, color], i) => {
            const from = i === 0 ? 900 : bands[i - 1][0];
            return [
              <stop key={`${x}a`} offset={(from - 900) / 280} stopColor={color} />,
              <stop key={`${x}b`} offset={(x - 900) / 280} stopColor={color} />,
            ];
          })}
        </linearGradient>
      </defs>
      <g fill="none">
        {[leftPipe, rightPipe].map((points, i) => (
          <g key={i}>
            <path d={smooth(points)} stroke="#949cb6" strokeWidth="7" />
            <path d={smooth(points)} stroke="#aeb5ca" strokeWidth="5" />
            <path d={smooth(points)} stroke="#989fb4" strokeWidth="6" strokeDasharray="1 4" strokeOpacity="0.300" />
          </g>
        ))}
        <path d="M816 406Q823 402 828 391Q832 383 838 379" stroke="#8c95b0" strokeWidth="6" />
        <path d="M1278 444L1275 468" stroke="#8c94ac" strokeWidth="6" />
        <path d={smooth(span)} stroke="url(#bands)" strokeWidth="9" />
      </g>
      <g stroke="#e8ecf8" strokeWidth="1" fill="#000">
        <path d="M1155 278v11h10l-3-3c2-5 8-6 14-3-4-6-13-7-17-1z" />
        <path d="M1180 302v-11h-10l3 3c-2 5-8 6-15 2 4 7 14 8 18 2z" />
      </g>
    </svg>
  );
}

function ScaleBar() {
  return (
    <div className="absolute top-[594px] left-[583px] w-[332px] text-[12px] leading-4">
      <div className="flex h-4 justify-between whitespace-nowrap">
        <span className="flex w-0 justify-center">0.00</span>
        <span className="flex w-0 justify-center">1000.00</span>
        <span className="w-0"><span className="-ml-6">2000.00 (mm)</span></span>
      </div>
      <div className="flex h-[13px] border border-black bg-white">
        <span className="flex-1 bg-black" />
        <span className="flex-1" />
        <span className="flex-1 bg-black" />
        <span className="flex-1" />
      </div>
      <div className="flex justify-around pt-1.5">
        <span>500.00</span>
        <span>1500.00</span>
      </div>
    </div>
  );
}

function Viewport() {
  return (
    <section className="flex grow flex-col border-t-2 border-l-2 border-[#70757c]">
      <div className="relative grow overflow-hidden bg-linear-to-b from-[#6b88d8] via-[#b8c6ea] via-55% to-[#fdfdfe] font-['Noto_Sans',sans-serif]">
        <div className="px-4 pt-[15px] text-[12px] leading-4 text-[#0a0a28]">
          <h2 className="font-bold text-black">C: Design Assessment</h2>
          <p>Total Deformation 2</p>
          <p>Type: Total Deformation</p>
          <p>Unit: mm</p>
          <p>2022/5/29 9:18</p>
        </div>
        <div className="flex gap-2 px-4 pt-3.5">
          <div className="mt-2.5 flex h-[163px] w-[17px] flex-col divide-y divide-black border border-black">
            {legend.map((color) => (
              <span key={color} className="flex-1" style={{ backgroundColor: color }} />
            ))}
          </div>
          <ul className="text-[12px] leading-[18px] text-[#0a0a28]">
            {levels.map((level, index) => (
              <li key={level} className={index === 0 || index === 9 ? "font-bold text-black" : ""}>{level}</li>
            ))}
          </ul>
        </div>
        <Pipes />
        <ScaleBar />
        <span className="absolute top-3.5 left-[1392px] text-[28px] font-bold text-white">A</span>
        <svg viewBox="1700 620 28 110" className="absolute top-[497px] right-0 h-[110px] w-7" aria-hidden="true">
          <path d="M1717 688l11-4" stroke="#1d8a28" strokeWidth="5" />
          <path d="M1717 688l12 36" stroke="#b00814" strokeWidth="4" />
          <path d="M1722 655l-5 33" stroke="#08085c" strokeWidth="5" />
          <path d="M1715 650l9-8 8 6-1 9-8 3-7-3z" fill="#06066c" />
          <path d="M1726 626h6l-6 8h6" stroke="#111" fill="none" />
        </svg>
      </div>
      <div className="relative flex h-[17px] shrink-0 border-b border-black bg-[#ededed] text-[11px] leading-4">
        <svg viewBox="0 0 240 16" className="absolute inset-y-0 left-0 h-4 w-[240px]" aria-hidden="true">
          <path d="M0 0h73l-7 16H7z" fill="#fdfdfd" />
          <path d="M0 0l7 16M66 16l7-16M68 6l5 10M142 16l7-16M144 6l5 10M227 16l7-16" stroke="#000" fill="none" />
        </svg>
        <span className="w-[73px] shrink-0" />
        <span className="grow border-t border-black" />
        <div className="absolute inset-y-0 left-0 flex whitespace-nowrap">
          <button type="button" className="w-[73px] text-center font-bold">Geometry</button>
          <button type="button" className="w-[73px]">Print Preview</button>
          <button type="button" className="w-[88px]">Report Preview</button>
        </div>
      </div>
    </section>
  );
}

function GraphPanel() {
  return (
    <section className="flex grow flex-col">
      <PanelHeader title="Graph" />
      <div className="flex grow flex-col border-r border-b border-l-2 border-r-[#ccc] border-b-[#ccc] border-l-[#70757c] bg-[#fdfdfd]">
        <div className="flex h-[25px] items-center overflow-hidden bg-[#ededed] pt-0.5 text-[13px]">
          <span className="mr-1 ml-0.5 h-[18px] w-[3px] shrink-0 border-r border-b border-[#a0a0a0]" />
          <span className="w-[62px] shrink-0">Animation</span>
          <Tool name="first" label="Previous frame" narrow />
          <Tool name="play" label="Play" narrow />
          <Tool name="stop" label="Stop" pressed narrow />
          <Tool name="last" label="Next frame" narrow />
          <Sep />
          <Tool name="frames" label="Distributed" pressed narrow />
          <Tool name="framesOff" label="Result sets" narrow />
          <Sep space="ml-1 mr-2.5" />
          <Combo label="Frames" value="20 Frames" width="w-[135px]" />
          <span className="w-2" />
          <Combo label="Duration" value="2 Sec (Auto)" width="w-[135px]" />
          <span className="w-1" />
          <Sep />
          <Tool name="save" label="Export video" narrow />
          <Sep />
          <Tool name="zoomPlay" label="Zoom to fit" narrow />
          <Tool name="table" label="Data table" narrow />
          <Sep />
          <Tool name="cycles" label="Cycles" narrow />
          <span className="pl-1 text-[12px] text-[#888]">3 Cycles</span>
        </div>
        <div className="px-5 pt-6 pl-8 text-[9px] leading-3">
          <div className="h-[65px] border border-[#999]" />
          <div className="h-[7px] border-x border-[#999]" />
          <div className="flex justify-between pt-0.5"><span className="-ml-1">0.</span><span>7.3497e-315</span></div>
        </div>
      </div>
      <div className="relative h-[22px] shrink-0 bg-[#f4f4f4] text-[13px]">
        <svg viewBox="0 0 150 22" className="absolute inset-y-0 left-0 h-[22px] w-[150px]" aria-hidden="true">
          <path d="M6 0l16 17 4 3h70l-3-3L77 0z" fill="#f6f6f6" stroke="#999" />
          <path d="M77 0l16 17 4 3h44V0z" fill="#fdfdfd" stroke="#999" />
        </svg>
        <div className="relative flex h-[22px] items-center pl-[27px]">
          <button type="button" className="w-[71px] text-left">Messages</button>
          <button type="button" className="font-bold">Graph</button>
        </div>
      </div>
    </section>
  );
}

function StatusBar() {
  const cell = "flex h-full items-center border-t border-l border-[#a0a0a0] pl-0.5 pb-0.5";
  return (
    <footer className="flex h-6 shrink-0 gap-[3px] overflow-hidden bg-[#ededed] text-[13px] whitespace-nowrap">
      <span className={`${cell} w-[421px] shrink-0`} />
      <span className={`${cell} w-[247px] shrink-0`} />
      <span className={`${cell} w-[208px] shrink-0 gap-1`}><Icon name="message" className="size-4" />2 Messages</span>
      <span className={`${cell} w-[458px] shrink-0`}>No Selection</span>
      <span className={`${cell} grow gap-3`}>
        <span>Metric (mm, t, N, s, mV, mA)</span>
        <span>Degrees</span>
        <span>rad/s</span>
        <span>Celsiu</span>
      </span>
    </footer>
  );
}

function Sogou({ className }: { className: string }) {
  return (
    <svg viewBox="0 0 32 32" className={className} aria-hidden="true">
      <path d="M2 6L25 1q3 0 4 3l3 20q0 3-3 4L8 32q-3 0-4-3L1 10q0-3 1-4z" fill="#d9502c" />
      <path d="M24 8c-6-3-15-1-15 4 0 6 14 3 14 8 0 4-9 5-15 2" stroke="#fff" strokeWidth="5" fill="none" />
    </svg>
  );
}

const apps: { label: string; running?: boolean; active?: boolean; icon: ReactNode }[] = [
  { label: "Cortana", icon: <circle cx="14" cy="14" r="7" fill="none" stroke="#111" strokeWidth="2.200" /> },
  { label: "Task view", icon: <path d="M6 6v3h10V6M6 22v-3h10v3M6 11.500h10v5H6zM20 6v4M20 12v3M20 18v4" fill="none" stroke="#111" strokeWidth="1.400" /> },
  {
    label: "Edge",
    icon: (
      <>
        <circle cx="14" cy="14" r="12" fill="#1577c8" />
        <path d="M2 13C3 5 9 2 14 2c7 0 12 5 12 11 0 4-4 6-8 5 2-4-1-8-6-8-5 0-9 3-10 3z" fill="#35c0b4" />
        <path d="M15 3c7 0 11 5 11 10 0 4-4 6-8 5 2-3 1-7-3-8z" fill="#5bd76c" />
        <path d="M10 14c-1 6 5 10 13 6-3 5-9 7-14 5-5-3-5-9 1-11z" fill="#0c4f9c" />
        <path d="M12 13c4-2 7 1 6 4 2 2 5 1 6 0-1 4-11 6-12-4z" fill="#dff1fa" />
      </>
    ),
  },
  {
    label: "Snipping tool",
    icon: (
      <>
        <ellipse cx="14" cy="11" rx="11" ry="8" transform="rotate(-25 14 11)" fill="#f5eef0" stroke="#cc5868" strokeWidth="1.500" />
        <path d="M8 15L22 6M9 11l9 8M20 7l-5 13" stroke="#aa8894" />
        <circle cx="16" cy="23" r="2.800" fill="none" stroke="#2f80b8" strokeWidth="1.800" />
        <circle cx="22" cy="18" r="2.800" fill="none" stroke="#2f80b8" strokeWidth="1.800" />
      </>
    ),
  },
  {
    label: "Explorer",
    running: true,
    icon: (
      <>
        <path d="M3 4h9l2 3h11v17H3z" fill="#e7b53c" />
        <path d="M3 9h22v15H3z" fill="#fbdc78" />
        <path d="M7 24v-8q0-2 2-2h10q2 0 2 2v8h-4v-5h-6v5z" fill="#3c97cc" />
      </>
    ),
  },
  {
    label: "WPS Office",
    running: true,
    icon: (
      <>
        <path d="M2 4h6l4 12 2-8h4l2 6 2-7h-6V4h11l-7 20h-4l-2-8-3 8H9z" fill="#c8202c" />
        <path d="M2 4h6l4 12-2 6z" fill="#e2444c" />
      </>
    ),
  },
  {
    label: "OBS",
    running: true,
    icon: (
      <>
        <circle cx="13" cy="13" r="11" fill="#2a2628" />
        <path d="M12 4c6 1 7 5 4 9M5 17c0-5 4-7 8-4M11 13c5 1 5 6 1 9" stroke="#bdb8ba" strokeWidth="2" fill="none" />
        <circle cx="20" cy="20" r="6" fill="#e40c10" />
      </>
    ),
  },
  {
    label: "ANSYS Workbench",
    running: true,
    icon: (
      <>
        <rect x="2" y="2" width="24" height="24" rx="3" fill="#f5c818" />
        <path d="M11 4h6l7 21h-6l-4-13-4 13H4z" fill="#1a1a1a" />
      </>
    ),
  },
  {
    label: "Mechanical",
    running: true,
    active: true,
    icon: (
      <>
        <circle cx="14" cy="14" r="12" fill="#a80c18" />
        <path d="M4 9a12 12 0 0 1 20 0c-6-3-14-3-20 0z" fill="#e25058" />
        <path d="M8 19V9l6 6 6-6v10" stroke="#fff" strokeWidth="3" fill="none" />
      </>
    ),
  },
];

function Taskbar() {
  return (
    <div className="flex h-10 shrink-0 items-center overflow-hidden bg-linear-to-r from-[#dcd6dc] via-[#d5d6de] via-70% to-[#e6d6d6] text-[14px]">
      <input
        aria-label="Windows search"
        placeholder="在这里输入你要搜索的内容"
        className="h-full w-[295px] shrink-0 border-t border-[#ccc] bg-[#fdfdfd] -indent-2 outline-none placeholder:text-[#333]"
      />
      <nav className="flex h-full grow">
        {apps.map((app) => (
          <button key={app.label} type="button" aria-label={app.label} className={`flex h-full w-[49px] flex-col items-center justify-between ${app.active ? "bg-[#f3f1f5]" : ""}`}>
            <svg viewBox="0 0 28 28" className="mt-1.5 size-7" aria-hidden="true">{app.icon}</svg>
            {app.running && <span className={`h-0.5 bg-[#2372b8] ${app.active ? "w-full" : "w-10"}`} />}
          </button>
        ))}
      </nav>
      <button type="button" className="flex shrink-0 items-center gap-2 pr-4">
        <svg viewBox="0 0 24 24" className="size-6" aria-hidden="true">
          <path d="M2 12C4 6 10 4 13 5s7 4 8 8c-6-3-12-3-19-1z" fill="#4ba4e4" />
          <path d="M11 10v10c0 3-4 2-4 0" fill="none" stroke="#78828c" strokeWidth="1.500" />
          <path d="M14 1v2M18 2v2M22 4v2M20 7v2M23 9v2" stroke="#68b4e8" strokeWidth="1.500" />
        </svg>
        正在下雨
      </button>
      <div className="flex w-[181px] shrink-0 items-center gap-2">
        <svg viewBox="0 0 16 16" className="size-4" aria-hidden="true"><path d="M2 11l6-6 6 6" fill="none" stroke="#111" strokeWidth="1.300" /></svg>
        <svg viewBox="0 0 14 18" className="h-[18px] w-3.5" aria-hidden="true"><rect x="4" y="0" width="6" height="12" rx="2" fill="#111" /><path d="M2 8v5h10V8M7 13v4M4 17h6" fill="none" stroke="#111" /></svg>
        <svg viewBox="0 0 18 16" className="h-4 w-[18px]" aria-hidden="true"><path d="M6 5h10v7H6z" fill="#111" stroke="#111" /><path d="M16 7h2v3h-2z" fill="#111" /><path d="M2 2v3M5 2v3M1 5h5v3l-2 2v3" fill="#fff" stroke="#111" /></svg>
        <svg viewBox="0 0 16 16" className="size-4" aria-hidden="true"><path d="M3 14A11 11 0 0 1 14 3M6 14a8 8 0 0 1 8-8M9 14a5 5 0 0 1 5-5M1 14A14 14 0 0 1 14 1" fill="none" stroke="#333" /><circle cx="13" cy="13" r="1.500" fill="#111" /></svg>
        <svg viewBox="0 0 16 16" className="size-4" aria-hidden="true"><path d="M1 6h2l4-4v12l-4-4H1zM10 6l5 5M15 6l-5 5" fill="none" stroke="#111" strokeWidth="1.200" /></svg>
        <span className="text-[14px]">中</span>
        <Sogou className="ml-1 size-4" />
      </div>
      <div className="w-[23px] shrink-0 overflow-hidden text-[12px] leading-[18px]">
        <p className="pl-4">9</p>
        <p>2022</p>
      </div>
    </div>
  );
}

export default function App() {
  return (
    <div className="relative flex min-h-screen w-full flex-col overflow-hidden bg-[#f6f6f7] font-['Open_Sans','Noto_Sans_CJK_SC',sans-serif] text-black">
      <header className="flex h-6 shrink-0 items-center justify-between bg-[#fdfdfd] pb-px font-['Noto_Sans',sans-serif] text-[12px]">
        <h1>tems - Mechanical [ANSYS Mechanical Enterprise]</h1>
        <button type="button" aria-label="Minimize" className="flex h-4 w-[26px] items-center">
          <span className="w-2.5 border-t border-black" />
        </button>
      </header>
      <Toolbars />

      <main className="flex grow pt-px pb-1.5">
        <aside className="flex w-[316px] shrink-0 flex-col">
          <Outline />
          <Details />
        </aside>
        <div className="ml-[5px] flex min-w-0 grow flex-col">
          <Viewport />
          <div className="mt-1.5 flex h-[203px] shrink-0 gap-[5px]">
            <div className="flex w-[880px] shrink-0"><GraphPanel /></div>
            <section className="flex min-w-0 grow flex-col">
              <PanelHeader title="Tabular Data" pin={false} />
              <div className="grow border-l border-[#666] bg-[#9d9d9d]" />
            </section>
          </div>
        </div>
      </main>

      <StatusBar />
      <Taskbar />

      {/* Input method bar floating over the status bar */}
      <div className="absolute right-0 bottom-10 flex items-center">
        <Sogou className="z-10 -mr-3 size-8" />
        <span className="flex h-6 w-10 items-center justify-end border-t border-[#9cc4e4] bg-[#fcfdfe] pr-1.5 text-[15px] font-bold text-[#1470b4]">中</span>
      </div>
    </div>
  );
}
